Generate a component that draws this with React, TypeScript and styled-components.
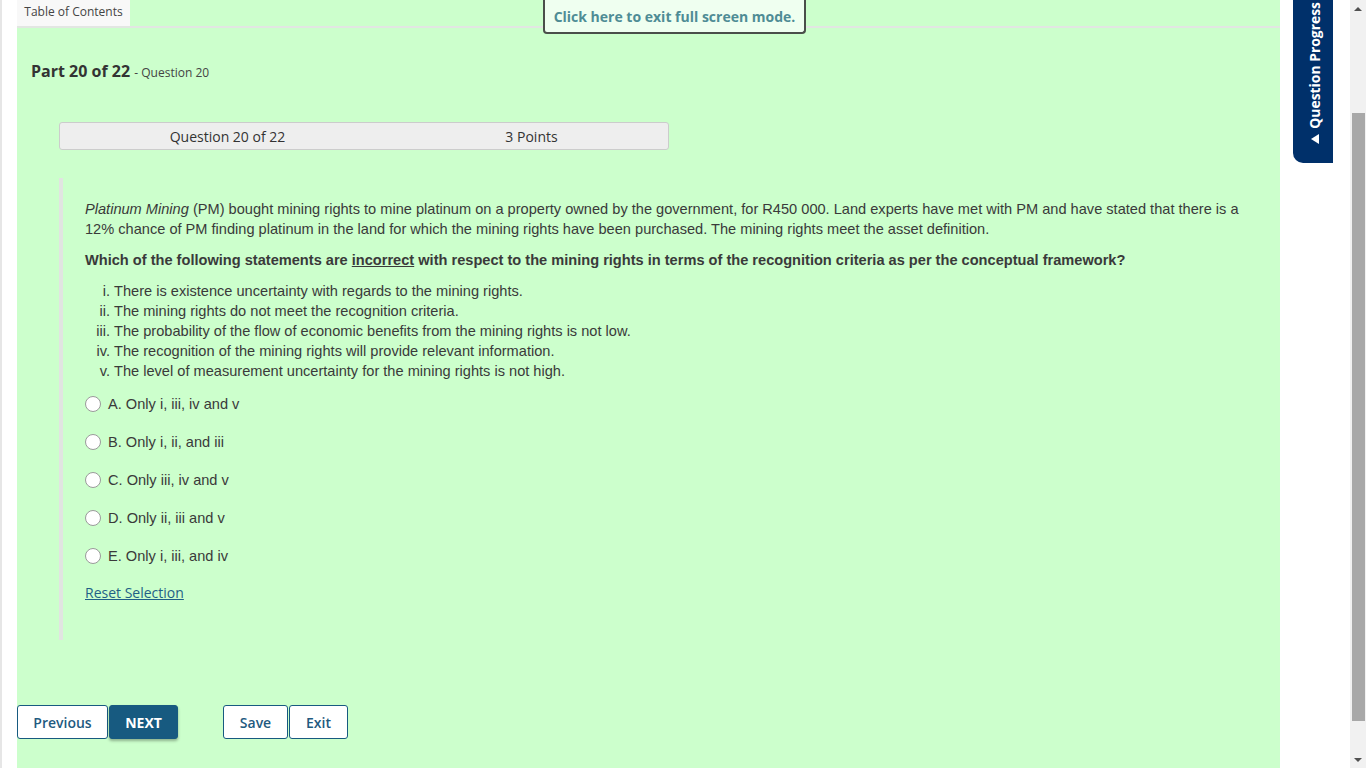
import React from "react";
import styled, { createGlobalStyle } from "styled-components";

const Global = createGlobalStyle`
  html, body { margin: 0; padding: 0; background: #ffffff; overflow: hidden; }
  #root { height: 768px; }
  * { box-sizing: border-box; }
`;

const Page = styled.div`
  display: flex;
  width: 1366px;
  height: 768px;
  background: #ffffff;
`;

const Gutter = styled.div`
  width: 17px;
  flex: none;
  border-left: 2px solid #e6e6e6;
  background: #ffffff;
`;

const Main = styled.main`
  position: relative;
  width: 1263px;
  flex: none;
  background: #ccffcc;
  display: flex;
  flex-direction: column;
`;

const TopBar = styled.div`
  height: 28px;
  border-bottom: 2px solid #e2e6e2;
  display: flex;
`;

const TocTab = styled.div`
  width: 113px;
  height: 26px;
  background: #f8f8f8;
  font-family: "Open Sans", sans-serif;
  font-size: 12px;
  color: #444;
  display: flex;
  align-items: center;
  justify-content: center;
  padding-bottom: 3px;
`;

const ExitBox = styled.div`
  position: absolute;
  left: 526px;
  top: 0;
  width: 263px;
  height: 34px;
  background: #effff0;
  border: 2px solid #4a4f4a;
  border-top: none;
  border-radius: 0 0 4px 4px;
  font-family: "Open Sans", sans-serif;
  font-weight: 700;
  font-size: 14px;
  color: #4e8c95;
  display: flex;
  align-items: flex-end;
  justify-content: center;
  padding-bottom: 6px;
`;

const PartTitle = styled.h1`
  margin: 31px 0 0 14px;
  font-family: "Open Sans", sans-serif;
  font-size: 16px;
  font-weight: 700;
  color: #333;
  line-height: 24px;
`;

const PartSub = styled.span`
  font-size: 12px;
  font-weight: 400;
  color: #444;
`;

const QHeader = styled.div`
  margin: 37px 0 0 42px;
  width: 610px;
  height: 28px;
  background: #eeeeee;
  border: 1px solid #cccccc;
  border-radius: 3px;
  display: grid;
  grid-template-columns: 335px 1fr;
  align-items: center;
  font-family: "Open Sans", sans-serif;
  font-size: 14px;
  color: #333;
`;

const QHeaderCell = styled.div`
  text-align: center;
`;

const QBody = styled.section`
  margin: 28px 20px 0 42px;
  border-left: 4px solid #e1e4e1;
  padding: 21px 0 37px 22px;
  font-family: "Liberation Sans", Arial, sans-serif;
  font-size: 14.6px;
  line-height: 20px;
  color: #3a3a3a;
`;

const Para = styled.p`
  margin: 0 0 11px;
`;

const Ask = styled.p`
  margin: 0 0 11px;
  font-weight: 700;
  u { text-decoration: underline; }
`;

const Roman = styled.ol`
  list-style-type: lower-roman;
  margin: 0 0 4px;
  padding-left: 29px;
`;

const Options = styled.div`
  display: flex;
  flex-direction: column;
`;

const Option = styled.label`
  display: flex;
  align-items: center;
  gap: 7px;
  padding: 9px 0;
  cursor: pointer;
`;

const Radio = styled.span`
  width: 16px;
  height: 16px;
  border-radius: 50%;
  border: 1px solid #9a9a9a;
  background: #ffffff;
  flex: none;
`;

const Reset = styled.a`
  display: inline-block;
  margin-top: 8px;
  font-family: "Open Sans", sans-serif;
  font-size: 14px;
  color: #1f5f86;
  text-decoration: underline;
`;

const NavRow = styled.div`
  margin-top: 65px;
  display: flex;
  align-items: center;
`;

const NavGroup = styled.div`
  display: flex;
  gap: 1px;
  margin-right: 45px;
`;

const Btn = styled.button<{ $primary?: boolean; $w: number }>`
  width: ${(p) => p.$w}px;
  height: 34px;
  border: 1px solid #175a80;
  border-radius: 3px;
  background: ${(p) => (p.$primary ? "#175a80" : "#ffffff")};
  color: ${(p) => (p.$primary ? "#ffffff" : "#1f5a80")};
  font-family: "Open Sans", sans-serif;
  font-size: 14px;
  font-weight: ${(p) => (p.$primary ? 700 : 600)};
  box-shadow: ${(p) => (p.$primary ? "0 2px 3px rgba(0,0,0,0.3)" : "none")};
  padding: 0;
  cursor: pointer;
`;

const RightArea = styled.div`
  width: 70px;
  flex: none;
  background: #ffffff;
  padding-left: 13px;
`;

const ProgressTab = styled.div`
  width: 40px;
  height: 163px;
  background: #00306a;
  border-radius: 0 0 0 10px;
  display: flex;
  flex-direction: column;
  align-items: center;
  justify-content: flex-end;
  gap: 5px;
  padding: 0 0 19px 3px;
`;

const ProgressText = styled.span`
  writing-mode: vertical-rl;
  transform: rotate(180deg);
  color: #ffffff;
  font-family: "Open Sans", sans-serif;
  font-weight: 700;
  font-size: 13.9px;
  line-height: 16px;
  white-space: nowrap;
`;

const LeftTriangle = styled.span`
  width: 0;
  height: 0;
  border-top: 5px solid transparent;
  border-bottom: 5px solid transparent;
  border-right: 8px solid #ffffff;
`;

const Scrollbar = styled.div`
  width: 16px;
  flex: none;
  background: #f1f1f1;
  display: flex;
  flex-direction: column;
  align-items: center;
`;

const Arrow = styled.div<{ $down?: boolean }>`
  height: 17px;
  display: flex;
  align-items: center;
  justify-content: center;
  width: 100%;
  &::after {
    content: "";
    border-left: 4px solid transparent;
    border-right: 4px solid transparent;
    ${(p) =>
      p.$down
        ? "border-top: 4px solid #505050;"
        : "border-bottom: 4px solid #505050;"}
  }
`;

const Track = styled.div`
  flex: 1;
  width: 100%;
  display: flex;
  justify-content: center;
`;

const Thumb = styled.div`
  margin-top: 96px;
  width: 13px;
  height: 608px;
  background: #a8a8a8;
`;

const statements = [
  "There is existence uncertainty with regards to the mining rights.",
  "The mining rights do not meet the recognition criteria.",
  "The probability of the flow of economic benefits from the mining rights is not low.",
  "The recognition of the mining rights will provide relevant information.",
  "The level of measurement uncertainty for the mining rights is not high.",
];

const answers = [
  "A. Only i, iii, iv and v",
  "B. Only i, ii, and iii",
  "C. Only iii, iv and v",
  "D. Only ii, iii and v",
  "E. Only i, iii, and iv",
];

export default function App() {
  return (
    <>
      <Global />
      <Page>
        <Gutter />
        <Main>
          <TopBar>
            <TocTab>Table of Contents</TocTab>
          </TopBar>
          <ExitBox>Click here to exit full screen mode.</ExitBox>
          <PartTitle>
            Part 20 of 22 <PartSub>- Question 20</PartSub>
          </PartTitle>
          <QHeader>
            <QHeaderCell>Question 20 of 22</QHeaderCell>
            <QHeaderCell>3 Points</QHeaderCell>
          </QHeader>
          <QBody>
            <Para>
              <i>Platinum Mining</i> (PM) bought mining rights to mine platinum on a property owned by the
              government, for R450 000. Land experts have met with PM and have stated that there is a 12% chance
              of PM finding platinum in the land for which the mining rights have been purchased. The mining rights
              meet the asset definition.
            </Para>
            <Ask>
              Which of the following statements are <u>incorrect</u> with respect to the mining rights in terms of
              the recognition criteria as per the conceptual framework?
            </Ask>
            <Roman>
              {statements.map((s) => (
                <li key={s}>{s}</li>
              ))}
            </Roman>
            <Options>
              {answers.map((a) => (
                <Option key={a}>
                  <Radio />
                  {a}
                </Option>
              ))}
            </Options>
            <Reset href="#">Reset Selection</Reset>
          </QBody>
          <NavRow>
            <NavGroup>
              <Btn $w={91}>Previous</Btn>
              <Btn $w={69} $primary>
                NEXT
              </Btn>
            </NavGroup>
            <NavGroup>
              <Btn $w={65}>Save</Btn>
              <Btn $w={59}>Exit</Btn>
            </NavGroup>
          </NavRow>
        </Main>
        <RightArea>
          <ProgressTab>
            <ProgressText>Question Progress</ProgressText>
            <LeftTriangle />
          </ProgressTab>
        </RightArea>
        <Scrollbar>
          <Arrow />
          <Track>
            <Thumb />
          </Track>
          <Arrow $down />
        </Scrollbar>
      </Page>
    </>
  );
}
